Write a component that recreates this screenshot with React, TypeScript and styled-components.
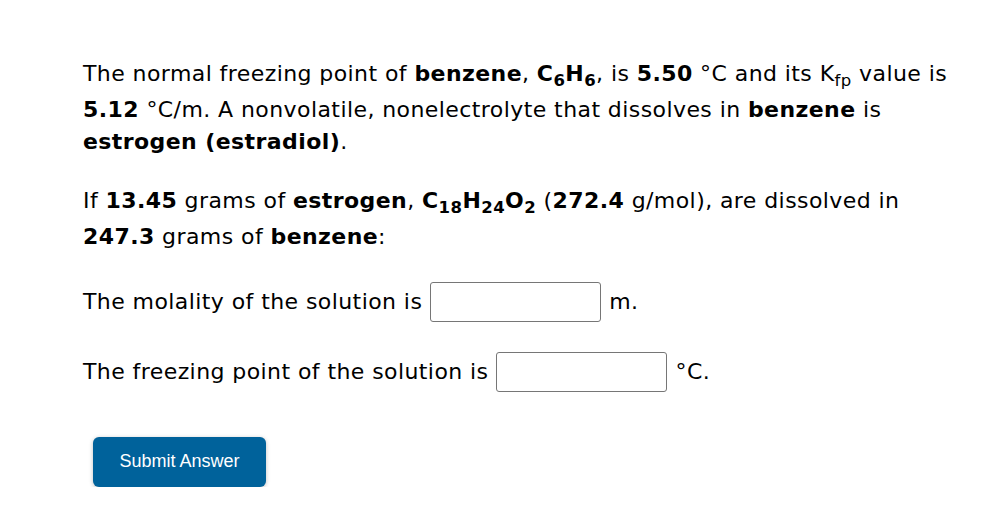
import React from "react";
import styled, { createGlobalStyle } from "styled-components";

const GlobalStyle = createGlobalStyle`
  html, body {
    margin: 0;
    padding: 0;
    background: #ffffff;
  }
`;

export default function App() {
  return (
    <>
      <GlobalStyle />
      <Page>
        <Question>
          The normal freezing point of <b>benzene</b>, <b>C<Sub>6</Sub>H<Sub>6</Sub></b>, is{" "}
          <b>5.50</b> °C and its K<Sub>fp</Sub> value is <b>5.12</b> °C/m. A nonvolatile,
          nonelectrolyte that dissolves in <b>benzene</b> is <b>estrogen (estradiol)</b>.
        </Question>
        <Question>
          If <b>13.45</b> grams of <b>estrogen</b>,{" "}
          <b>
            C<Sub>18</Sub>H<Sub>24</Sub>O<Sub>2</Sub>
          </b>{" "}
          (<b>272.4</b> g/mol), are dissolved in <b>247.3</b> grams of <b>benzene</b>:
        </Question>

        <AnswerRow>
          <span>The molality of the solution is</span>
          <AnswerInput type="text" />
          <span>m.</span>
        </AnswerRow>
        <AnswerRow>
          <span>The freezing point of the solution is</span>
          <AnswerInput type="text" />
          <span>°C.</span>
        </AnswerRow>

        <SubmitButton type="button">Submit Answer</SubmitButton>
      </Page>
    </>
  );
}

// -------------------------- style --------------------------

const Page = styled.div`
  width: 880px;
  padding: 58px 0 0 83px;
  font-family: "DejaVu Sans", Verdana, sans-serif;
  font-size: 22px;
  letter-spacing: 0.42px;
  color: #000;
`;

const Question = styled.p`
  margin: 0 0 27px;
  line-height: 32px;

  & + & {
    margin-bottom: 29px;
  }
`;

const Sub = styled.sub`
  font-size: 0.75em;
  vertical-align: sub;
  line-height: 1.55;
`;

const AnswerRow = styled.div`
  display: flex;
  align-items: center;
  gap: 8px;
  margin-bottom: 30px;
  line-height: 32px;
`;

const AnswerInput = styled.input`
  box-sizing: border-box;
  width: 171px;
  height: 40px;
  border: 1px solid #767676;
  border-radius: 3px;
  background: #fff;
  font: inherit;
  padding: 0 6px;
  &:focus {
    outline: none;
  }
`;

const SubmitButton = styled.button`
  display: block;
  margin: 45px 0 0 10px;
  width: 173px;
  height: 50px;
  border: none;
  border-radius: 6px;
  background: #00629b;
  color: #fff;
  font-family: "Liberation Sans", Arial, sans-serif;
  font-size: 18px;
  letter-spacing: 0;
  box-shadow: 0 1px 4px rgba(0, 0, 0, 0.25);
  cursor: pointer;
`;
